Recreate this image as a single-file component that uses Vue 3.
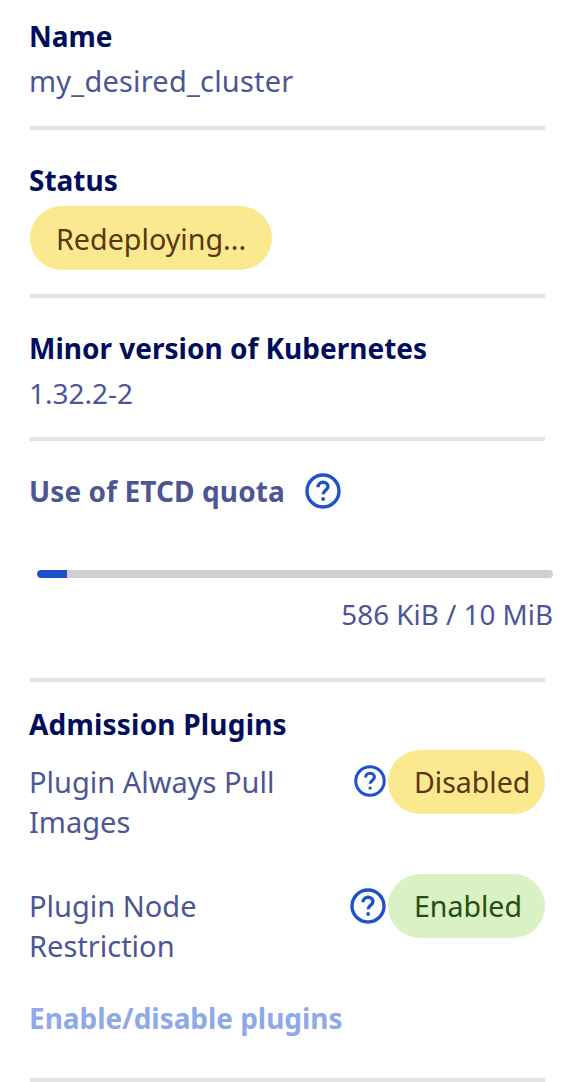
<script setup>
const plugins = [
  { name: 'Plugin Always Pull Images', state: 'Disabled', cls: 'warn', iconCls: 'q-a' },
  { name: 'Plugin Node Restriction', state: 'Enabled', cls: 'ok', iconCls: 'q-b' },
]
</script>

<template>
  <main class="page">
    <section class="tile tile-name">
      <h3 class="label">Name</h3>
      <p class="value">my_desired_cluster</p>
    </section>
    <section class="tile tile-status">
      <h3 class="label">Status</h3>
      <span class="chip warn status-chip">Redeploying...</span>
    </section>
    <section class="tile tile-version">
      <h3 class="label">Minor version of Kubernetes</h3>
      <p class="value">1.32.2-2</p>
    </section>
    <section class="tile tile-quota">
      <h3 class="label muted">
        Use of ETCD quota
        <svg class="help big" viewBox="0 0 36 36" aria-hidden="true">
          <circle cx="18" cy="18" r="16" />
          <path d="M13 14.2c0-3 2.2-4.9 5.1-4.9 2.8 0 4.9 1.7 4.9 4.3 0 3.8-4.9 3.9-4.9 7.6" />
          <circle class="dot" cx="18.1" cy="26" r="1.9" />
        </svg>
      </h3>
      <div class="bar"><div class="fill" :style="{ width: '5.8%' }"></div></div>
      <p class="usage">586 KiB / 10 MiB</p>
    </section>
    <section class="tile tile-plugins">
      <h3 class="label">Admission Plugins</h3>
      <div v-for="p in plugins" :key="p.name" class="plugin">
        <span class="plugin-name">{{ p.name }}</span>
        <svg class="help" :class="p.iconCls" viewBox="0 0 36 36" aria-hidden="true">
          <circle cx="18" cy="18" r="16" />
          <path d="M13 14.2c0-3 2.2-4.9 5.1-4.9 2.8 0 4.9 1.7 4.9 4.3 0 3.8-4.9 3.9-4.9 7.6" />
          <circle class="dot" cx="18.1" cy="26" r="1.9" />
        </svg>
        <span class="chip plugin-chip" :class="p.cls">{{ p.state }}</span>
      </div>
      <a class="link">Enable/disable plugins</a>
    </section>
  </main>
</template>

<style>
html, body { margin: 0; background: #fff; }
</style>

<style scoped>
.page {
  width: 572px;
  height: 1082px;
  box-sizing: border-box;
  padding: 16px 27px 0 30px;
  font-family: "Noto Sans", "Open Sans", sans-serif;
  overflow: hidden;
}
.tile {
  border-bottom: 4px solid #e3e3e3;
  padding-bottom: 24px;
  margin-bottom: 30px;
}
.label {
  margin: 0 0 0 -1px;
  font-size: 28px;
  line-height: 40px;
  font-weight: 700;
  color: #000e5c;
}
.label.muted {
  color: #4d5693;
  display: flex;
  align-items: center;
  gap: 20px;
  letter-spacing: 0.1px;
}
.value {
  margin: 5px 0 0 -1px;
  font-size: 29px;
  line-height: 40px;
  color: #4d5693;
}
.tile-name { padding-bottom: 25px; }
.tile-name .value { letter-spacing: 0.2px; }
.tile-version .value { font-size: 28px; }
.tile-plugins .label { letter-spacing: 0.2px; }
.chip {
  display: inline-flex;
  align-items: center;
  height: 64px;
  padding: 0 26px;
  border-radius: 32px;
  font-size: 28.7px;
  box-sizing: border-box;
  flex: none;
}
.status-chip { margin-top: 6px; vertical-align: top; }
.plugin-chip { width: 157px; padding-right: 0; font-size: 28.5px; }
.warn { background: #fbe98f; color: #5d3610; }
.ok { background: #d9f1c4; color: #24500f; }
.help { flex: none; width: 32px; height: 32px; }
.help.big { width: 36px; height: 36px; }
.help circle { fill: none; stroke: #1f50d0; stroke-width: 3.4; }
.help path { fill: none; stroke: #1f50d0; stroke-width: 3.4; }
.help .dot { fill: #1f50d0; stroke: none; }
.tile-quota { padding-bottom: 44px; margin-bottom: 22px; }
.bar {
  margin: 59px -8px 0 7px;
  height: 8px;
  border-radius: 4px;
  background: #d0d0d0;
  overflow: hidden;
}
.fill { height: 100%; background: #1f50d0; border-radius: 4px 0 0 4px; }
.usage {
  margin: 16px -8px 0 0;
  text-align: right;
  font-size: 27.8px;
  line-height: 40px;
  color: #4d5693;
}
.plugin {
  display: flex;
  align-items: flex-start;
  margin-top: 6px;
  margin-bottom: 32px;
}
.plugin-name {
  width: 270px;
  margin-left: -1px;
  margin-right: auto;
  font-size: 29px;
  line-height: 40px;
  color: #4d5693;
  padding-top: 12px;
}
.help.q-a { margin-top: 15px; margin-right: 2px; }
.help.q-b { margin-top: 14px; margin-right: 2px; width: 36px; height: 36px; }
.link {
  display: block;
  margin-left: -1px;
  font-size: 28px;
  line-height: 40px;
  font-weight: 700;
  letter-spacing: -0.05px;
  color: #8fa9e8;
}
.tile-plugins { margin-bottom: 0; padding-bottom: 40px; }
</style>
